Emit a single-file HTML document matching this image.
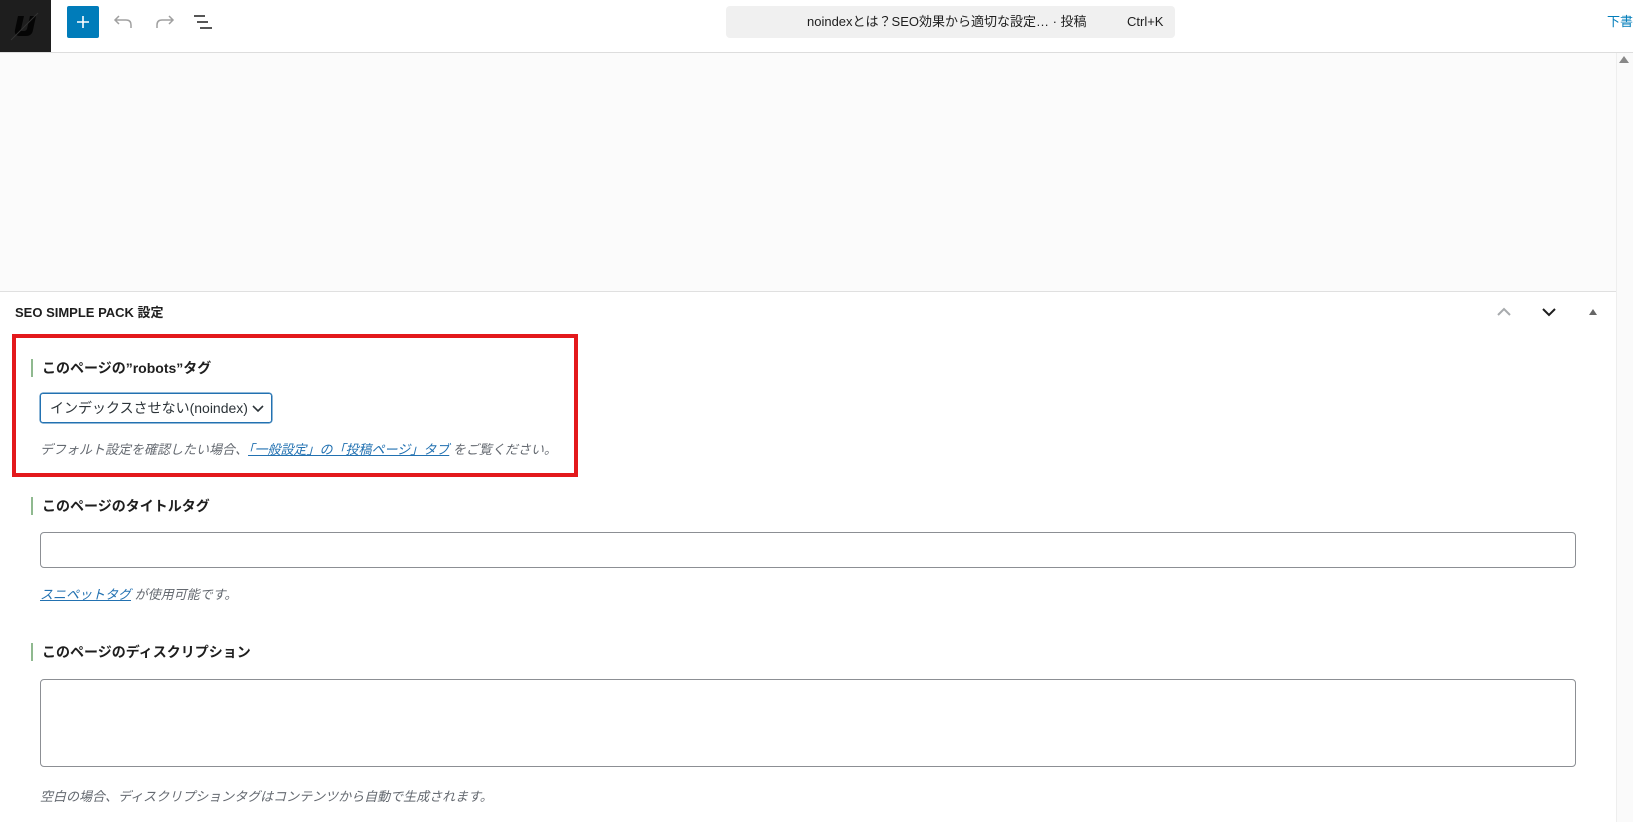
<!DOCTYPE html>
<html><head><meta charset="utf-8"><style>
*{box-sizing:border-box;margin:0;padding:0}
body{width:1633px;height:822px;overflow:hidden;background:#fff;font-family:"Liberation Sans","Noto Sans CJK JP",sans-serif;position:relative;color:#1e1e1e}
.a{position:absolute}
.lbl{position:absolute;left:31px;border-left:2px solid #8fb98f;padding-left:9px;font-size:14px;font-weight:bold;line-height:18px;color:#1e1e1e}
.help{position:absolute;left:40px;font-size:13px;font-style:italic;color:#646970}
.help a{color:#2271b1;text-decoration:underline}
.inp{position:absolute;left:40px;width:1536px;border:1px solid #8c8f94;border-radius:4px;background:#fff}
</style></head><body>
<div class="a" style="left:0;top:0;width:51px;height:52px;background:#1e1e1e"></div>
<svg class="a" style="left:8px;top:10px" width="34" height="32" viewBox="0 0 34 32"><path d="M10 6 L7 20 Q6 26 12 26 H18 Q24 26 25 20 L28 6 H22 L19 19 Q18 21 16 21 H14 Q12 21 13 19 L16 6 Z" fill="#050505"/><path d="M3 30 L30 3" stroke="#333" stroke-width="1"/></svg>
<div class="a" style="left:67px;top:6px;width:32px;height:32px;background:#007cba;border-radius:2px"></div>
<svg class="a" style="left:75px;top:14px" width="16" height="16"><path d="M8 2 V14 M2 8 H14" stroke="#fff" stroke-width="1.6"/></svg>
<svg class="a" style="left:112px;top:12px" width="24" height="20" viewBox="0 0 24 20"><path d="M7 4 L3 8 L7 12 M3 8 H14 Q19 8 19 13 V16" fill="none" stroke="#a0a0a0" stroke-width="1.5"/></svg>
<svg class="a" style="left:152px;top:12px" width="24" height="20" viewBox="0 0 24 20"><path d="M17 4 L21 8 L17 12 M21 8 H10 Q5 8 5 13 V16" fill="none" stroke="#a0a0a0" stroke-width="1.5"/></svg>
<svg class="a" style="left:192px;top:14px" width="22" height="16" viewBox="0 0 22 16"><path d="M2 2 H13 M5 8 H16 M8 14 H20" stroke="#1e1e1e" stroke-width="1.6"/></svg>
<div class="a" style="left:726px;top:6px;width:449px;height:32px;background:#f0f0f0;border-radius:4px"></div>
<div class="a" style="left:807px;top:14px;font-size:13px;line-height:16px;color:#1e1e1e">noindexとは？SEO効果から適切な設定… · 投稿</div>
<div class="a" style="left:1127px;top:14px;font-size:13px;line-height:16px;color:#1e1e1e">Ctrl+K</div>
<div class="a" style="left:1607px;top:14px;font-size:13px;line-height:16px;color:#007cba;white-space:nowrap">下書</div>
<div class="a" style="left:0;top:52px;width:1633px;height:1px;background:#ddd"></div>
<div class="a" style="left:0;top:53px;width:1616px;height:238px;background:#fbfbfb"></div>
<div class="a" style="left:0;top:291px;width:1616px;height:1px;background:#e0e0e0"></div>
<div class="a" style="left:1616px;top:53px;width:17px;height:769px;background:#fafafa;border-left:1px solid #eee"></div>
<div class="a" style="left:1619px;top:56px;width:0;height:0;border-left:5px solid transparent;border-right:5px solid transparent;border-bottom:7px solid #888"></div>
<div class="a" style="left:15px;top:305px;font-size:13px;font-weight:bold;line-height:16px;color:#1e1e1e">SEO SIMPLE PACK 設定</div>
<svg class="a" style="left:1496px;top:306px" width="16" height="12"><path d="M2 9 L8 3 L14 9" fill="none" stroke="#a7aaad" stroke-width="2"/></svg>
<svg class="a" style="left:1541px;top:306px" width="16" height="12"><path d="M2 3 L8 9 L14 3" fill="none" stroke="#1e1e1e" stroke-width="2"/></svg>
<div class="a" style="left:1589px;top:309px;width:0;height:0;border-left:4px solid transparent;border-right:4px solid transparent;border-bottom:6px solid #666"></div>
<div class="a" style="left:12px;top:334px;width:566px;height:143px;border:4px solid #e3191c"></div>
<div class="lbl" style="top:359px">このページの”robots”タグ</div>
<div class="a" style="left:40px;top:393px;width:232px;height:30px;border:1px solid #2271b1;border-radius:3px;box-shadow:0 0 0 .5px #2271b1;font-size:14px;line-height:28px;padding-left:9px;color:#2c3338">インデックスさせない(noindex)</div>
<svg class="a" style="left:252px;top:405px" width="12" height="8"><path d="M1 1 L6 6 L11 1" fill="none" stroke="#2c3338" stroke-width="1.6"/></svg>
<div class="help" style="top:439px">デフォルト設定を確認したい場合、<a>「一般設定」の「投稿ページ」タブ</a> をご覧ください。</div>
<div class="lbl" style="top:497px">このページのタイトルタグ</div>
<div class="inp" style="top:532px;height:36px"></div>
<div class="help" style="top:584px"><a>スニペットタグ</a> が使用可能です。</div>
<div class="lbl" style="top:643px">このページのディスクリプション</div>
<div class="inp" style="top:679px;height:88px"></div>
<div class="help" style="top:786px">空白の場合、ディスクリプションタグはコンテンツから自動で生成されます。</div>
</body></html>
